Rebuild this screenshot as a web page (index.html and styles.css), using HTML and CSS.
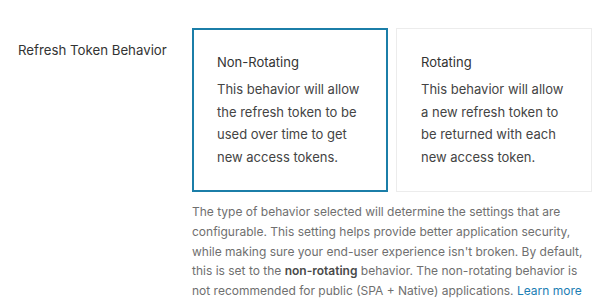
FILE: index.html
```html
<!DOCTYPE html>
<html lang="en">
<head>
    <meta charset="UTF-8">
    <title>Refresh Token Behavior</title>
    <link rel="stylesheet" href="styles.css">
</head>
<body>
    <div class="field-row">
        <label class="field-label">Refresh Token Behavior</label>
        <div class="field-body">
            <div class="option-cards">
                <div class="option-card selected">
                    <div class="option-title">Non-Rotating</div>
                    <p class="option-text">This behavior will allow the refresh token to be used over time to get new access tokens.</p>
                </div>
                <div class="option-card">
                    <div class="option-title">Rotating</div>
                    <p class="option-text">This behavior will allow a new refresh token to be returned with each new access token.</p>
                </div>
            </div>
            <p class="field-help">
                The type of behavior selected will determine the settings that are configurable. This setting helps provide better application security, while making sure your end-user experience isn't broken. By default, this is set to the <strong>non-rotating</strong> behavior. The non-rotating behavior is not recommended for public (SPA + Native) applications. <a href="#">Learn more</a>
            </p>
        </div>
    </div>
</body>
</html>
```

FILE: styles.css
```css
* {
    box-sizing: border-box;
    margin: 0;
    padding: 0;
}

body {
    font-family: Inter, 'Noto Sans', sans-serif;
    color: #333;
    background: #fff;
}

.field-row {
    display: flex;
    padding: 28px 0 0 18px;
}

.field-label {
    width: 174px;
    flex-shrink: 0;
    font-size: 13.25px;
    line-height: 20px;
    padding-top: 12px;
    color: #333;
}

.field-body {
    width: 400px;
}

.option-cards {
    display: flex;
    gap: 8px;
}

.option-card {
    width: 196px;
    padding: 22px 23px;
    border: 1px solid #ececec;
    cursor: pointer;
}

.option-card:not(.selected) {
    padding: 23px 24px;
}

.option-card.selected {
    border: 2px solid #1b7ea8;
}

.option-title {
    font-size: 13px;
    line-height: 20px;
    margin-bottom: 6px;
    color: #333;
}

.option-text {
    font-size: 13px;
    line-height: 22.5px;
    color: #444;
}

.field-help {
    margin-top: 10px;
    font-size: 12px;
    line-height: 19.8px;
    color: #6f6f6f;
}

.field-help strong {
    font-weight: 600;
    color: #4a4a4a;
}

.field-help a {
    color: #1b7eb4;
    text-decoration: none;
}
```
